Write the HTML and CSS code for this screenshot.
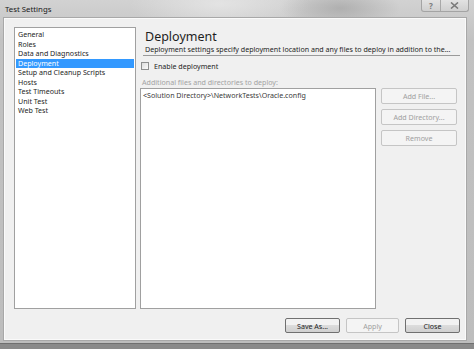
FILE: index.html
```html
<!DOCTYPE html>
<html lang="en">
<head>
    <meta charset="UTF-8">
    <meta name="viewport" content="width=device-width, initial-scale=1.0">
    <title>Test Settings</title>
    <link rel="stylesheet" href="styles.css">
</head>
<body>
    <div class="window">
        <div class="titlebar">
            <span class="caption">Test Settings</span>
            <div class="caption-buttons">
                <span class="cap-btn help">?</span>
                <span class="cap-btn close">
                    <svg width="9" height="7" viewBox="0 0 9 7">
                        <path d="M1 0.5 L8 6.5 M8 0.5 L1 6.5" stroke="#7a7a7a" stroke-width="1.6" fill="none"/>
                    </svg>
                </span>
            </div>
        </div>

        <div class="client">
            <div class="main">
                <ul class="nav">
                    <li>General</li>
                    <li>Roles</li>
                    <li>Data and Diagnostics</li>
                    <li class="selected">Deployment</li>
                    <li>Setup and Cleanup Scripts</li>
                    <li>Hosts</li>
                    <li>Test Timeouts</li>
                    <li>Unit Test</li>
                    <li>Web Test</li>
                </ul>

                <div class="panel">
                    <h2 class="heading">Deployment</h2>
                    <p class="desc">Deployment settings specify deployment location and any files to deploy in addition to the...</p>
                    <label class="check">
                        <span class="box"></span>
                        Enable deployment
                    </label>
                    <p class="files-label">Additional files and directories to deploy:</p>
                    <div class="files">
                        <div class="file-list">
                            <div>&lt;Solution Directory&gt;\NetworkTests\Oracle.config</div>
                        </div>
                        <div class="file-actions">
                            <button class="btn" disabled>Add File...</button>
                            <button class="btn" disabled>Add Directory...</button>
                            <button class="btn" disabled>Remove</button>
                        </div>
                    </div>
                </div>
            </div>

            <div class="footer">
                <button class="btn">Save As...</button>
                <button class="btn" disabled>Apply</button>
                <button class="btn">Close</button>
            </div>
        </div>
    </div>
</body>
</html>
```

FILE: styles.css
```css
html, body {
    margin: 0;
    padding: 0;
}
body {
    width: 474px;
    height: 349px;
    overflow: hidden;
    font-family: "Noto Sans", "Liberation Sans", sans-serif;
    font-size: 7.1px;
    color: #1e1e1e;
    background: #8a8a8a;
}
.window {
    height: 343px;
    display: flex;
    flex-direction: column;
    background:
        radial-gradient(ellipse 60px 22px at 340px 8px, rgba(150, 150, 150, 0.55), transparent),
        radial-gradient(ellipse 90px 30px at 220px 4px, rgba(235, 235, 235, 0.7), transparent),
        linear-gradient(#d2d2d2, #c2c2c2 40px, #bdbdbd);
    border-bottom: 1px solid #6f6f6f;
}
.titlebar {
    height: 17px;
    display: flex;
    justify-content: space-between;
    align-items: flex-start;
}
.caption {
    margin: 4px 0 0 5px;
    font-size: 7.8px;
    color: #1a1a1a;
}
.caption-buttons {
    display: flex;
    margin-right: 5px;
    border: 1px solid #a4a4a4;
    border-top: none;
    border-radius: 0 0 3px 3px;
    background: linear-gradient(#e2e2e2, #cfcfcf);
}
.cap-btn {
    height: 11px;
    display: flex;
    align-items: center;
    justify-content: center;
    color: #7a7a7a;
    font-size: 8px;
    font-weight: bold;
}
.help {
    width: 18px;
    border-right: 1px solid #a8a8a8;
}
.close {
    width: 27px;
}
.client {
    flex: 1;
    margin: 0 7px 2px 3px;
    background: #f0f0f0;
    border: 1px solid #a8a8a8;
    box-shadow: inset 0 0 0 1px #fafafa;
    padding: 9px 6px 7px 10px;
    display: flex;
    flex-direction: column;
}
.main {
    display: flex;
    gap: 4px;
    height: 282px;
}
.nav {
    list-style: none;
    flex-shrink: 0;
    margin: 0;
    width: 118px;
    padding: 2px 1px;
    background: #fff;
    border: 1px solid #a0a0a0;
}
.nav li {
    height: 9.5px;
    line-height: 9.5px;
    padding-left: 2px;
    white-space: nowrap;
}
.nav .selected {
    background: #3399ff;
    color: #fff;
}
.panel {
    flex: 1;
    min-width: 0;
    display: flex;
    flex-direction: column;
}
.heading {
    margin: 3px 0 0 5px;
    font-size: 12.5px;
    font-weight: normal;
    line-height: 14px;
}
.desc {
    margin: 1px 0 0 3px;
    padding: 0 0 2px 2px;
    line-height: 8px;
    white-space: nowrap;
    overflow: hidden;
    border-bottom: 1px solid #9a9a9a;
}
.check {
    display: flex;
    align-items: center;
    gap: 5px;
    margin: 5px 0 0 1px;
}
.box {
    width: 6px;
    height: 6px;
    border: 1px solid #8e8f8f;
    background: linear-gradient(135deg, #dcdcdc, #fbfbfb);
}
.files-label {
    margin: 7px 0 0 2px;
    color: #a3a3a3;
    line-height: 9px;
}
.files {
    flex: 1;
    display: flex;
    gap: 5px;
    margin-top: 1px;
}
.file-list {
    width: 230px;
    background: #fff;
    border: 1px solid #a0a0a0;
    padding: 2px 2px;
    line-height: 9px;
    color: #3a3a3a;
}
.file-actions {
    width: 76px;
    display: flex;
    flex-direction: column;
    gap: 5px;
}
.btn {
    font-family: inherit;
    font-size: 7.1px;
    height: 16px;
    padding: 0;
    border: 1px solid #707070;
    border-radius: 2px;
    background: linear-gradient(#f2f2f2 45%, #dcdcdc 50%, #d0d0d0);
    color: #1e1e1e;
}
.btn:disabled {
    border-color: #c5c5c5;
    background: #f4f4f4;
    color: #a0a0a0;
}
.footer {
    margin-top: 9px;
    display: flex;
    justify-content: flex-end;
    gap: 6px;
}
.footer .btn {
    width: 55px;
    height: 15px;
}
.footer .btn:nth-child(2) {
    width: 53px;
}
```
